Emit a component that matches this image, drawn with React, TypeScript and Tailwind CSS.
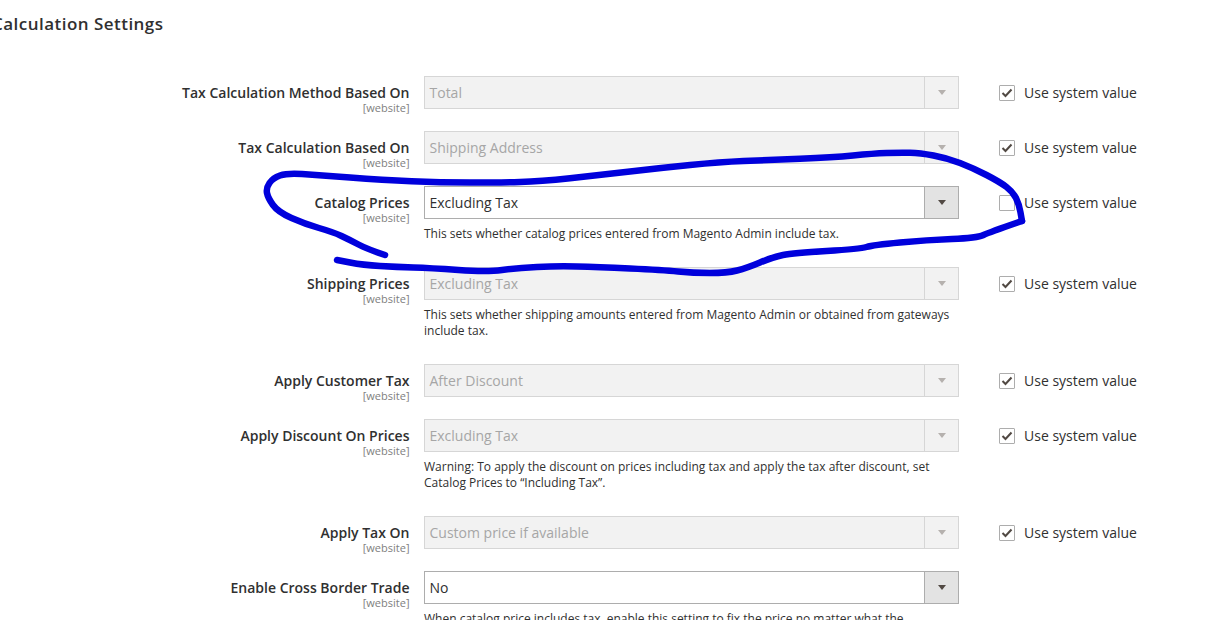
import React from 'react';

type Row = {
  label: string;
  value: string;
  enabled?: boolean;
  inherit?: boolean;
  noInherit?: boolean;
  note?: React.ReactNode;
};

const rows: Row[] = [
  { label: 'Tax Calculation Method Based On', value: 'Total', inherit: true },
  { label: 'Tax Calculation Based On', value: 'Shipping Address', inherit: true },
  {
    label: 'Catalog Prices',
    value: 'Excluding Tax',
    enabled: true,
    note: 'This sets whether catalog prices entered from Magento Admin include tax.',
  },
  {
    label: 'Shipping Prices',
    value: 'Excluding Tax',
    inherit: true,
    note: 'This sets whether shipping amounts entered from Magento Admin or obtained from gateways include tax.',
  },
  { label: 'Apply Customer Tax', value: 'After Discount', inherit: true },
  {
    label: 'Apply Discount On Prices',
    value: 'Excluding Tax',
    inherit: true,
    note: 'Warning: To apply the discount on prices including tax and apply the tax after discount, set Catalog Prices to “Including Tax”.',
  },
  { label: 'Apply Tax On', value: 'Custom price if available', inherit: true },
  {
    label: 'Enable Cross Border Trade',
    value: 'No',
    enabled: true,
    noInherit: true,
    note: 'When catalog price includes tax, enable this setting to fix the price no matter what the customer’s tax rate.',
  },
];

// marker stroke, traced in two pieces because of the hard corner on the right
const markerTop = [
  [385, 255], [367, 249], [350, 240], [333, 232], [305, 224], [278, 212], [268, 198], [266, 188], [273, 178],
  [287, 173], [317, 175], [383, 180], [440, 182.5], [500, 182.5], [540, 181.5], [600, 175], [660, 168], [720, 162],
  [767, 160], [833, 157.5], [873, 153.5], [900, 152.5], [920, 153], [947, 158], [973, 168], [1000, 182], [1013, 192],
  [1019, 204], [1022, 221],
];
const markerBottom = [
  [1022, 221], [990, 232], [977, 238], [927, 240], [873, 245], [860, 249], [793, 253], [773, 257], [747, 268],
  [727, 273], [693, 273], [663, 270], [597, 267], [557, 266], [517, 268], [487, 272], [430, 268], [397, 267],
  [363, 265], [337, 260],
];

function smooth(points: number[][]) {
  let d = `M${points[0][0]} ${points[0][1]}`;
  for (let i = 1; i < points.length - 1; i++) {
    const mx = (points[i][0] + points[i + 1][0]) / 2;
    const my = (points[i][1] + points[i + 1][1]) / 2;
    d += ` Q${points[i][0]} ${points[i][1]} ${mx} ${my}`;
  }
  const last = points[points.length - 1];
  return `${d} L${last[0]} ${last[1]}`;
}

export default function App() {
  return (
    <div className="relative h-[620px] w-[1230px] overflow-hidden bg-white font-['Open_Sans',sans-serif] text-[#303030]">
      <h2 className="ml-[-8px] pt-[13px] text-[17px] leading-[22px] font-semibold tracking-[0.47px] whitespace-nowrap">
        Calculation Settings
      </h2>

      {/* Settings rows */}
      <div className="pt-[41px]">
        {rows.map((row) => (
          <SettingRow key={row.label} {...row} />
        ))}
      </div>

      {/* Hand drawn marker around the Catalog Prices row */}
      <svg className="pointer-events-none absolute top-0 left-0" width="1230" height="620" fill="none">
        <path d={smooth(markerTop)} stroke="#0000dc" strokeWidth="6.5" strokeLinecap="round" strokeLinejoin="round" />
        <path d={smooth(markerBottom)} stroke="#0000dc" strokeWidth="6.5" strokeLinecap="round" strokeLinejoin="round" />
      </svg>
    </div>
  );
}

function SettingRow({ label, value, enabled, inherit, noInherit, note }: Row) {
  return (
    <div className="mb-[22px] flex items-start">
      <div className="h-[33px] w-[409.5px] shrink-0 pt-[7px] text-right">
        <div className="text-[14px] leading-[19px] font-semibold">{label}</div>
        <div className="mt-[-2px] text-[11px] leading-[15px] text-[#808080]">[website]</div>
      </div>

      <div className="ml-[14.5px] w-[535px] shrink-0">
        <div
          className={
            enabled
              ? 'flex h-[33px] items-stretch border border-[#adadad] bg-white text-[#303030]'
              : 'flex h-[33px] items-stretch border border-[#d6d6d6] bg-[#f2f2f2] text-[#a6a6a6]'
          }
        >
          <span className="flex-1 pl-[4.5px] text-[14px] leading-[31px]">{value}</span>
          <span
            className={
              enabled
                ? 'flex w-[34px] items-center justify-center border-l border-[#adadad] bg-[#e3e3e3]'
                : 'flex w-[34px] items-center justify-center border-l border-[#d6d6d6]'
            }
          >
            <svg width="8" height="5" viewBox="0 0 8 5">
              <path d="M0 0H8L4 5Z" fill={enabled ? '#514943' : '#b5b1ae'} />
            </svg>
          </span>
        </div>
        {note && <p className="mt-[7px] mb-[3px] text-[12px] leading-[16px] text-[#303030]">{note}</p>}
      </div>

      {!noInherit && (
        <label className="ml-[40px] flex h-[33px] items-center whitespace-nowrap">
          <span className="flex h-[16px] w-[16px] items-center justify-center rounded-[1px] border border-[#adadad] bg-white">
            {inherit && (
              <svg width="12" height="10" viewBox="0 0 12 10" fill="none">
                <path d="M1.5 5 L4.5 8 L10.5 1.5" stroke="#514943" strokeWidth="2" />
              </svg>
            )}
          </span>
          <span className="ml-[9px] text-[14px] leading-[19px] text-[#303030]">Use system value</span>
        </label>
      )}
    </div>
  );
}
